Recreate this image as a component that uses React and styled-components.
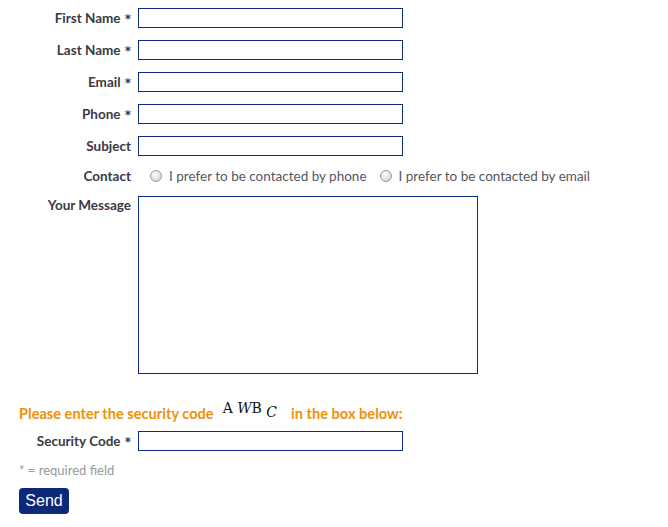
import styled, { createGlobalStyle } from "styled-components";

const Global = createGlobalStyle`
  body {
    margin: 0;
    background: #fff;
    font-family: Lato, "Open Sans", sans-serif;
  }
`;

const Form = styled.form`
  padding-top: 8px;
  width: 668px;
`;

const Row = styled.div`
  display: flex;
  align-items: ${(p) => (p.$top ? "flex-start" : "center")};
  margin-top: ${(p) => p.$shift || 0}px;
  margin-bottom: ${(p) => (p.$gap === undefined ? 12 : p.$gap)}px;
`;

const Label = styled.label`
  display: block;
  width: 131px;
  height: 20px;
  padding-right: 7px;
  box-sizing: content-box;
  text-align: right;
  font-size: 13.5px;
  font-weight: 700;
  color: #3a3a44;
  line-height: 20px;
  white-space: nowrap;
  margin-top: ${(p) => (p.$top ? "-1px" : "0")};
`;

const Star = styled.span`
  font-family: "DejaVu Sans", sans-serif;
  font-size: 12px;
  line-height: 1;
`;

const Input = styled.input`
  display: block;
  width: 265px;
  height: 20px;
  box-sizing: border-box;
  border: 1px solid #0b2a80;
  margin: 0;
  padding: 1px 3px;
  font-size: 13px;
`;

const TextArea = styled.textarea`
  display: block;
  width: 340px;
  height: 178px;
  box-sizing: border-box;
  border: 1px solid #0b2a80;
  margin: 0;
  resize: none;
`;

const Options = styled.div`
  display: flex;
  align-items: center;
  padding-left: 12px;
  gap: 13px;
`;

const Option = styled.span`
  display: inline-flex;
  align-items: center;
  gap: 7px;
  font-size: 13.5px;
  color: #555660;
`;

const Radio = styled.span`
  width: 12px;
  height: 12px;
  border-radius: 50%;
  border: 1px solid #9a9a9a;
  background: radial-gradient(circle at 40% 35%, #ffffff 0%, #e2e2e2 55%, #c4c4c4 100%);
  box-sizing: border-box;
`;

const Notice = styled.div`
  display: flex;
  align-items: flex-end;
  padding-left: 19px;
  margin-top: 31px;
  margin-bottom: 9px;
  font-size: 14.6px;
  font-weight: 700;
  color: #f0900a;
`;

const Captcha = styled.span`
  font-family: "DejaVu Serif", "Liberation Serif", serif;
  font-weight: 400;
  color: #111;
  font-size: 14px;
  margin: 0 14px 0 9px;
  position: relative;
  top: -6px;
`;

const Slant = styled.span`
  font-style: italic;
  position: relative;
  top: ${(p) => p.$dy || 0}px;
`;

const Required = styled.div`
  padding-left: 19px;
  margin-top: 11px;
  font-size: 13px;
  color: #999;
`;

const SendButton = styled.button`
  display: block;
  margin: 10px 0 0 19px;
  width: 50px;
  height: 26px;
  border: none;
  border-radius: 4px;
  background: #0c2878;
  color: #fff;
  font-family: "Liberation Sans", Arial, sans-serif;
  font-size: 16px;
  padding: 0;
  cursor: pointer;
`;

const fields = [
  { label: "First Name", required: true },
  { label: "Last Name", required: true },
  { label: "Email", required: true },
  { label: "Phone", required: true },
  { label: "Subject" },
];

export default function App() {
  return (
    <>
      <Global />
      <Form>
        {fields.map((f) => (
          <Row key={f.label}>
            <Label>
              {f.label}
              {f.required && <Star> *</Star>}
            </Label>
            <Input type="text" />
          </Row>
        ))}
        <Row $shift={-2} $gap={10}>
          <Label>Contact</Label>
          <Options>
            <Option>
              <Radio />I prefer to be contacted by phone
            </Option>
            <Option>
              <Radio />I prefer to be contacted by email
            </Option>
          </Options>
        </Row>
        <Row $top $gap={0}>
          <Label $top>Your Message</Label>
          <TextArea />
        </Row>
        <Notice>
          Please enter the security code
          <Captcha>
            A <Slant>W</Slant>B <Slant $dy={4}>C</Slant>
          </Captcha>
          in the box below:
        </Notice>
        <Row $gap={0}>
          <Label>
            Security Code<Star> *</Star>
          </Label>
          <Input type="text" />
        </Row>
        <Required>* = required field</Required>
        <SendButton type="button">Send</SendButton>
      </Form>
    </>
  );
}
